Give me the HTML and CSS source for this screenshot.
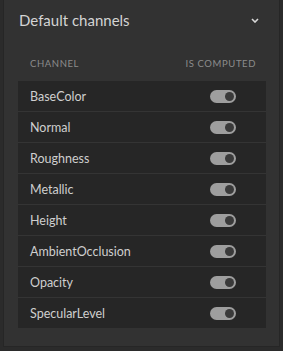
FILE: index.html
```html
<!DOCTYPE html>
<html>
<head>
  <title>Default channels</title>
  <link rel="stylesheet" href="styles.css">
</head>
<body>
  <div class="panel">
    <div class="panel-head">
      <span class="panel-title">Default channels</span>
      <svg class="chevron" width="8" height="5" viewBox="0 0 8 5">
        <path d="M1 1 L4 4 L7 1" fill="none" stroke="#d8d8d8" stroke-width="1.6"/>
      </svg>
    </div>

    <div class="cols">
      <span>Channel</span>
      <span>Is computed</span>
    </div>

    <div class="table">
      <div class="row"><span>BaseColor</span><span class="toggle"></span></div>
      <div class="row"><span>Normal</span><span class="toggle"></span></div>
      <div class="row"><span>Roughness</span><span class="toggle"></span></div>
      <div class="row"><span>Metallic</span><span class="toggle"></span></div>
      <div class="row"><span>Height</span><span class="toggle"></span></div>
      <div class="row"><span>AmbientOcclusion</span><span class="toggle"></span></div>
      <div class="row"><span>Opacity</span><span class="toggle"></span></div>
      <div class="row"><span>SpecularLevel</span><span class="toggle"></span></div>
    </div>
  </div>
</body>
</html>
```

FILE: styles.css
```css
html, body {
  margin: 0;
  padding: 0;
  height: 100%;
  background: #2b2b2b;
  font-family: Lato, "Open Sans", sans-serif;
}

.panel {
  margin: 0 3px;
  height: 347px;
  box-sizing: border-box;
  background: #323232;
  border: 1px solid #262626;
  border-top: none;
  padding: 0 13px 0 14px;
}

.panel-head {
  height: 40px;
  display: flex;
  align-items: center;
  justify-content: space-between;
  padding-left: 1px;
  padding-right: 7px;
}

.panel-title {
  color: #d4d4d4;
  font-size: 15px;
}

.chevron {
  display: block;
}

.cols {
  display: flex;
  justify-content: space-between;
  padding: 18px 10px 0 12px;
  height: 23px;
  color: #8c8c8c;
  font-size: 9.5px;
  letter-spacing: 0.6px;
  text-transform: uppercase;
}

.table {
  background: #262626;
}

.row {
  height: 30px;
  display: flex;
  align-items: center;
  justify-content: space-between;
  padding: 0 30px 0 12px;
  color: #cfcfcf;
  font-size: 12.5px;
}

.row + .row {
  border-top: 1px solid #343434;
}

.toggle {
  width: 26px;
  height: 13px;
  border-radius: 7px;
  background: #9e9e9e;
  position: relative;
}

.toggle::after {
  content: "";
  position: absolute;
  right: 2px;
  top: 2px;
  width: 9px;
  height: 9px;
  border-radius: 50%;
  background: #3a3a3a;
}
```
